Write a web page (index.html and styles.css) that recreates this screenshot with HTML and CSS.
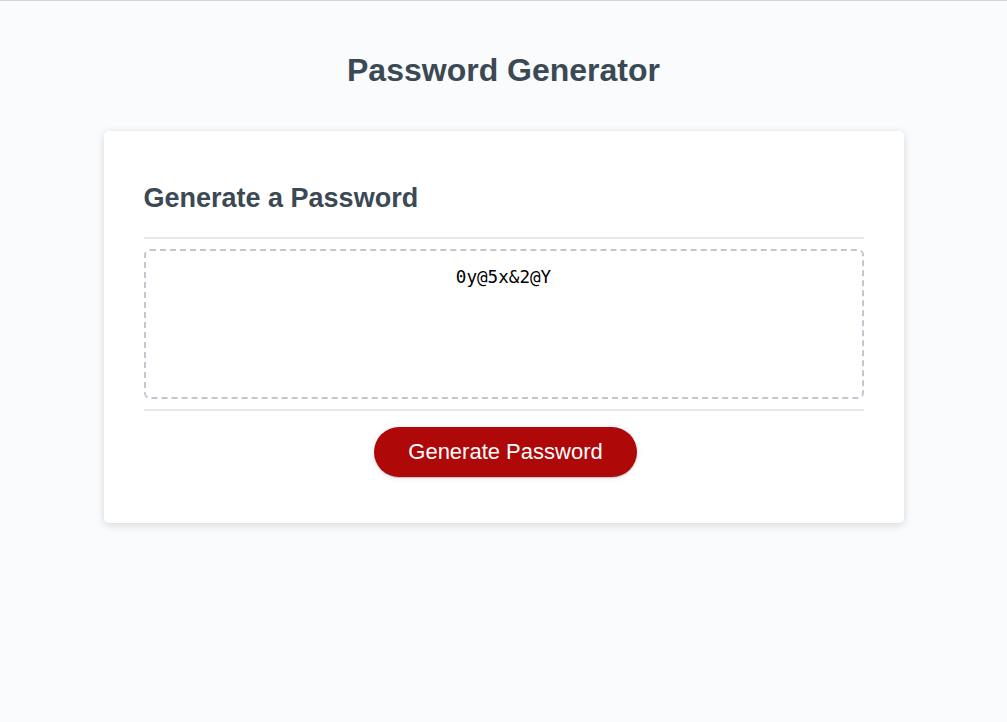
FILE: index.html
```html
<!DOCTYPE html>
<html lang="en">
<head>
<meta charset="UTF-8">
<title>Password Generator</title>
<link rel="stylesheet" href="styles.css">
</head>
<body>
<div class="wrapper">
  <header class="header">
    <h1 class="title">Password Generator</h1>
  </header>
  <div class="card">
    <div class="card-header">
      <h2 class="card-title">Generate a Password</h2>
    </div>
    <div class="card-body">
      <textarea class="password" rows="2" readonly>0y@5x&amp;2@Y</textarea>
    </div>
    <div class="card-footer">
      <button class="btn" type="button">Generate Password</button>
    </div>
  </div>
</div>
</body>
</html>
```
FILE: styles.css
```css
html, body {
  height: 100%;
}
body {
  margin: 0;
  border-top: 1px solid #d3d6d9;
  box-sizing: border-box;
  font-family: "Liberation Sans", Arial, sans-serif;
  background-color: #f9fbfd;
}
.wrapper {
  padding: 30px 20px 0;
}
.header {
  text-align: center;
  padding: 0 20px 20px;
  color: #3b4954;
}
.title {
  margin: 21.44px 0;
  font-size: 32px;
  font-weight: bold;
}
.card {
  background-color: #fff;
  border-radius: 5px;
  box-shadow: rgba(0, 0, 0, 0.15) 0 2px 8px 0;
  color: #3b4954;
  font-size: 18px;
  margin: 0 auto;
  max-width: 800px;
  padding: 30px 40px;
  box-sizing: border-box;
}
.card-title {
  font-size: 27px;
  margin: 22.4px 0;
  font-weight: bold;
}
.card-header::after,
.card-footer::before {
  content: "";
  display: block;
  width: 100%;
  background: #e7e9eb;
  height: 2px;
}
.password {
  display: block;
  width: 100%;
  box-sizing: border-box;
  margin: 10px 0;
  padding: 15px 15px 85px;
  font-family: "DejaVu Sans Mono", "Liberation Mono", monospace;
  font-size: 17.6px;
  line-height: 23px;
  color: #000;
  text-align: center;
  border: 2px dashed #c0c7cf;
  border-radius: 6px;
  resize: none;
  overflow: hidden;
  outline: none;
  background: #fff;
}
.card-footer {
  text-align: center;
}
.btn {
  border: none;
  background-color: #af0808;
  border-radius: 25px;
  box-shadow: rgba(0, 0, 0, 0.1) 0 1px 6px 0, rgba(0, 0, 0, 0.2) 0 1px 1px 0;
  color: #fff;
  display: inline-block;
  font-family: "Liberation Sans", Arial, sans-serif;
  font-size: 22px;
  line-height: 22px;
  margin: 16px 16px 16px 20px;
  padding: 14px 34px;
  cursor: pointer;
}
```
